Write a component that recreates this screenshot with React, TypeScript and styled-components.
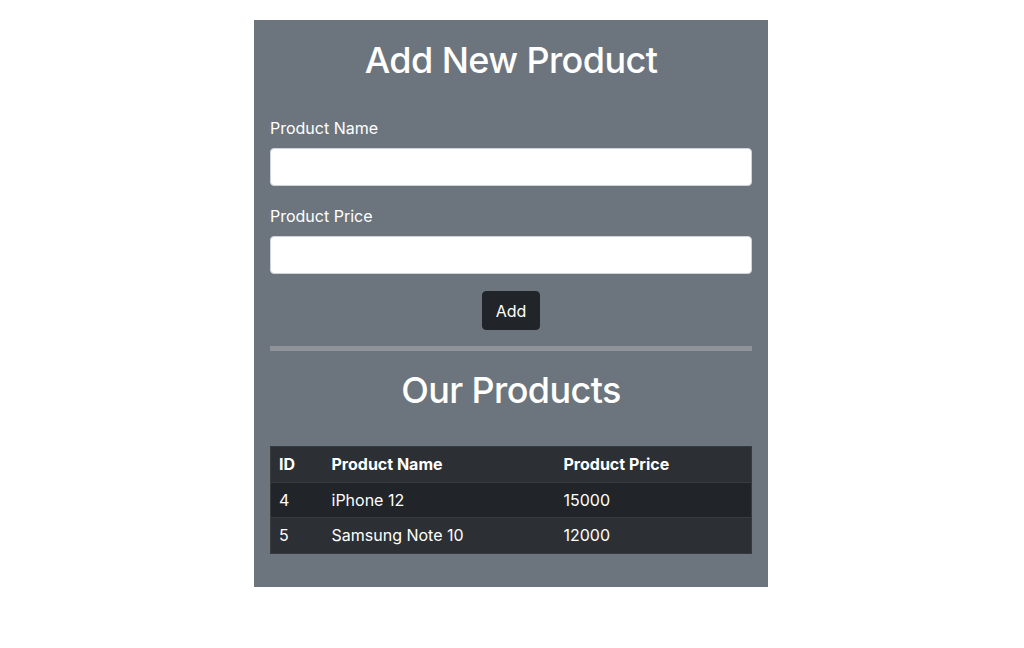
import React from 'react';
import styled, { createGlobalStyle } from 'styled-components';

const GlobalStyle = createGlobalStyle`
  * { box-sizing: border-box; }
  body {
    margin: 0;
    background: #fff;
    font-family: Inter, "Noto Sans", "Liberation Sans", sans-serif;
    font-size: 16px;
    line-height: 24px;
    color: #212529;
  }
`;

const Panel = styled.div`
  width: 514px;
  margin: 20px 0 0 254px;
  padding: 16px 16px 1px;
  background-color: #6c757d;
  color: #fff;
`;

const Title = styled.h1<{ $gap: number }>`
  margin: 0 0 ${(p) => p.$gap}px;
  font-size: 36px;
  font-weight: 500;
  line-height: 48px;
  text-align: center;
  letter-spacing: -0.6px;
`;

const Field = styled.div`
  margin-bottom: 18px;
`;

const Label = styled.label`
  display: block;
  margin-bottom: 8px;
  font-size: 16px;
  line-height: 24px;
`;

const Input = styled.input`
  display: block;
  width: 100%;
  height: 38px;
  padding: 6px 12px;
  font-family: inherit;
  font-size: 16px;
  border: 1px solid #ced4da;
  border-radius: 4px;
  background: #fff;
`;

const Actions = styled.div`
  display: flex;
  justify-content: center;
  margin-top: -1px;
`;

const Button = styled.button`
  height: 39px;
  padding: 0 13px;
  font-family: inherit;
  font-size: 16px;
  color: #fff;
  background-color: #212529;
  border: 1px solid #212529;
  border-radius: 4px;
`;

const Divider = styled.hr`
  height: 5px;
  margin: 16px 0 15px;
  border: 0;
  background-color: #8e949a;
`;

const Table = styled.table`
  width: 100%;
  margin-top: 32px;
  margin-bottom: 32px;
  border-collapse: collapse;
  color: #fff;
  border: 1px solid #373b3e;
`;

const Row = styled.tr<{ $striped: boolean }>`
  background-color: ${(p) => (p.$striped ? '#2c3034' : '#212529')};
`;

const Cell = styled.td<{ $head?: boolean }>`
  padding: 5px 8px;
  height: 35.5px;
  text-align: left;
  font-weight: ${(p) => (p.$head ? 700 : 400)};
  border-bottom: 1px solid #373b3e;
  vertical-align: middle;
`;

const products = [
  { id: 4, name: 'iPhone 12', price: 15000 },
  { id: 5, name: 'Samsung Note 10', price: 12000 },
];

export default function App() {
  return (
    <>
      <GlobalStyle />
      <Panel>
        <Title $gap={32}>Add New Product</Title>
        <Field>
          <Label>Product Name</Label>
          <Input type="text" />
        </Field>
        <Field>
          <Label>Product Price</Label>
          <Input type="text" />
        </Field>
        <Actions>
          <Button>Add</Button>
        </Actions>
        <Divider />
        <Title $gap={0}>Our Products</Title>
        <Table>
          <thead>
            <Row $striped>
              <Cell as="th" $head style={{ width: 53 }}>ID</Cell>
              <Cell as="th" $head style={{ width: 232 }}>Product Name</Cell>
              <Cell as="th" $head>Product Price</Cell>
            </Row>
          </thead>
          <tbody>
            {products.map((p, i) => (
              <Row key={p.id} $striped={i % 2 === 1}>
                <Cell>{p.id}</Cell>
                <Cell>{p.name}</Cell>
                <Cell>{p.price}</Cell>
              </Row>
            ))}
          </tbody>
        </Table>
      </Panel>
    </>
  );
}
